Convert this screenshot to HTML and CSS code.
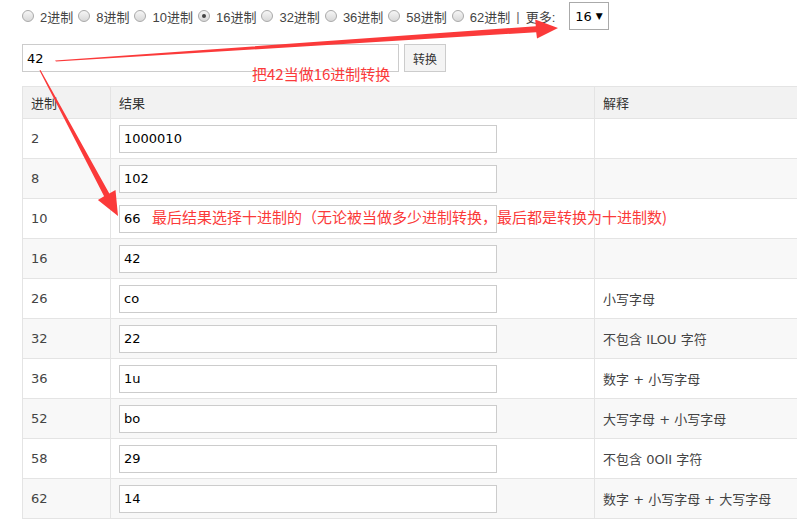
FILE: index.html
```html
<!DOCTYPE html>
<html lang="zh">
<head>
<meta charset="utf-8">
<title>进制转换</title>
<link rel="stylesheet" href="styles.css">
</head>
<body>
<div class="page">
  <div class="radios">
    <label class="opt"><span class="radio"></span><span>2进制</span></label>
    <label class="opt"><span class="radio"></span><span>8进制</span></label>
    <label class="opt"><span class="radio"></span><span>10进制</span></label>
    <label class="opt"><span class="radio checked"></span><span>16进制</span></label>
    <label class="opt"><span class="radio"></span><span>32进制</span></label>
    <label class="opt"><span class="radio"></span><span>36进制</span></label>
    <label class="opt"><span class="radio"></span><span>58进制</span></label>
    <label class="opt"><span class="radio"></span><span>62进制</span></label>
    <span class="sep">|</span>
    <span class="more">更多:</span>
    <span class="select">16 <span class="caret">▼</span></span>
  </div>
  <div class="inputrow">
    <div class="field main">42</div>
    <div class="btn">转换</div>
  </div>
  <table class="tbl">
    <thead>
      <tr><th class="c1">进制</th><th class="c2">结果</th><th class="c3">解释</th></tr>
    </thead>
    <tbody>
      <tr><td>2</td><td><div class="field">1000010</div></td><td></td></tr>
      <tr><td>8</td><td><div class="field">102</div></td><td></td></tr>
      <tr><td>10</td><td><div class="field">66</div></td><td></td></tr>
      <tr><td>16</td><td><div class="field">42</div></td><td></td></tr>
      <tr><td>26</td><td><div class="field">co</div></td><td>小写字母</td></tr>
      <tr><td>32</td><td><div class="field">22</div></td><td>不包含 ILOU 字符</td></tr>
      <tr><td>36</td><td><div class="field">1u</div></td><td>数字 + 小写字母</td></tr>
      <tr><td>52</td><td><div class="field">bo</div></td><td>大写字母 + 小写字母</td></tr>
      <tr><td>58</td><td><div class="field">29</div></td><td>不包含 0OlI 字符</td></tr>
      <tr><td>62</td><td><div class="field">14</div></td><td>数字 + 小写字母 + 大写字母</td></tr>
    </tbody>
  </table>
</div>
<div class="note note1">把42当做16进制转换</div>
<div class="note note2">最后结果选择十进制的（无论被当做多少进制转换，最后都是转换为十进制数)</div>
<svg class="arrows" width="797" height="528" viewBox="0 0 797 528">
  <polygon fill="#fb3a3a" points="55,60.5 535.8,26.2 535.2,19.6 558,28 537,38.6 536.2,32.2 56,61.6"/>
  <polygon fill="#fb3a3a" points="39.5,70.5 104.1,196.2 97.9,200 118,216 115.5,190.1 109.3,193.4 40.5,70"/>
</svg>
</body>
</html>
```
FILE: styles.css
```css
html, body {
  margin: 0;
  padding: 0;
  background: #fff;
}
body {
  font-family: "DejaVu Sans", Verdana, "Noto Sans CJK SC", sans-serif;
  font-size: 13px;
  color: #333;
  position: relative;
  width: 797px;
  height: 528px;
  overflow: hidden;
}
.page {
  padding: 2px 0 0 22px;
}
.radios {
  display: flex;
  align-items: center;
  height: 28px;
  font-family: "Liberation Sans", Arial, "Noto Sans CJK SC", sans-serif;
}
.opt {
  display: flex;
  align-items: center;
  margin-right: 5px;
  color: #444;
}
.radio {
  width: 10px;
  height: 10px;
  border: 1px solid #a9a9a9;
  border-radius: 50%;
  background: linear-gradient(#f6f6f6, #d8d8d8);
  margin-right: 6px;
  position: relative;
}
.radio.checked::after {
  content: "";
  position: absolute;
  left: 3px;
  top: 3px;
  width: 4px;
  height: 4px;
  border-radius: 50%;
  background: #444;
}
.sep {
  color: #666;
  margin: 0 6px 0 1px;
}
.more {
  color: #444;
  margin-right: 14px;
}
.select {
  box-sizing: border-box;
  height: 28px;
  width: 40px;
  border: 1px solid #aaa;
  display: flex;
  align-items: center;
  padding-left: 5px;
  color: #000;
  font-family: "DejaVu Sans", Verdana, sans-serif;
  font-size: 13px;
}
.caret {
  font-size: 9px;
  margin-left: 4px;
}
.inputrow {
  display: flex;
  margin-top: 14px;
  gap: 5px;
}
.field {
  box-sizing: border-box;
  height: 28px;
  border: 1px solid #ccc;
  background: #fff;
  color: #000;
  display: flex;
  align-items: center;
  padding-left: 4px;
  width: 378px;
}
.field.main {
  width: 377px;
}
.btn {
  box-sizing: border-box;
  height: 28px;
  width: 42px;
  border: 1px solid #ccc;
  background: #f4f4f4;
  color: #333;
  display: flex;
  align-items: center;
  justify-content: center;
  font-size: 12px;
}
.tbl {
  margin-top: 14px;
  border-collapse: collapse;
  width: 777px;
  table-layout: fixed;
}
.tbl th, .tbl td {
  border: 1px solid #e4e4e4;
  padding: 0 8px;
  text-align: left;
  box-sizing: border-box;
  color: #444;
}
.tbl th {
  height: 32px;
  background: #f2f2f2;
  font-weight: normal;
  color: #333;
}
.tbl td {
  height: 40px;
}
.tbl tbody tr:nth-child(even) td {
  background: #f8f8f8;
}
.c1 { width: 88px; }
.c2 { width: 484px; }
.note {
  position: absolute;
  color: #fb3a3a;
  font-family: "Noto Sans CJK SC", "DejaVu Sans", sans-serif;
  font-size: 15px;
  white-space: nowrap;
  line-height: 20px;
}
.note1 {
  left: 252px;
  top: 64px;
}
.note2 {
  left: 152px;
  top: 207px;
}
.arrows {
  position: absolute;
  left: 0;
  top: 0;
  pointer-events: none;
}
```
